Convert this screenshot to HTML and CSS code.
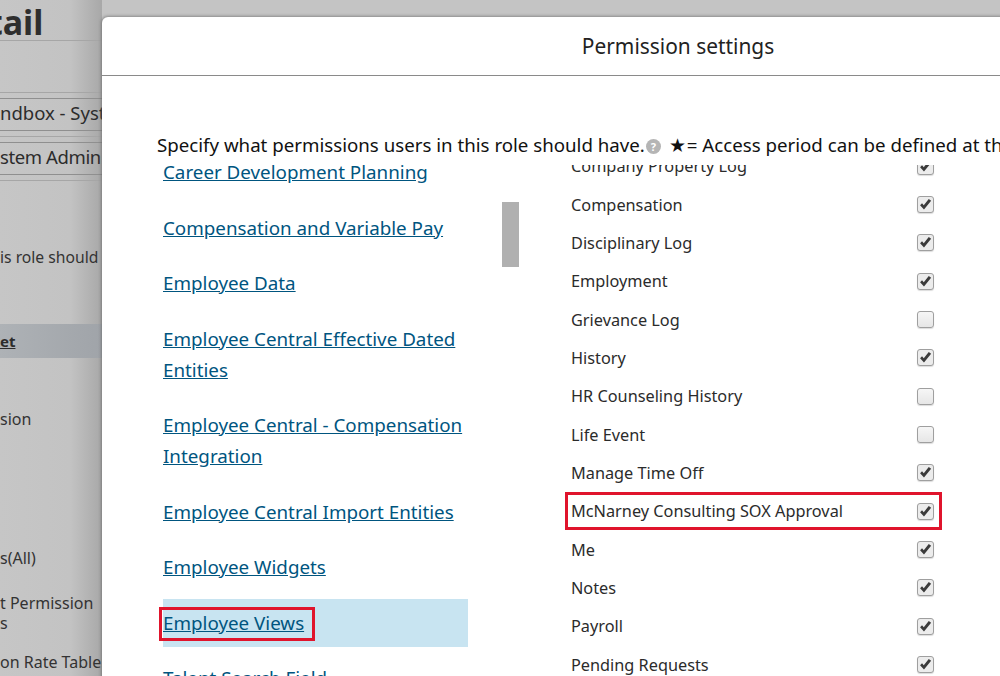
FILE: index.html
```html
<!DOCTYPE html>
<html lang="en">
<head>
<meta charset="utf-8">
<title>Permission settings</title>
<link rel="stylesheet" href="styles.css">
</head>
<body>
<div class="page">
  <aside class="backdrop">
    <h1 class="bg-title">tail</h1>
    <div class="bg-field"><span>ndbox - Syst</span></div>
    <div class="bg-field bg-field-next"><span>stem Admin</span></div>
    <p class="bg-note">is role should</p>
    <div class="bg-band"><span>et</span></div>
    <p class="bg-item bg-sion">sion</p>
    <p class="bg-item bg-all">s(All)</p>
    <p class="bg-item bg-perm">t Permission<br>s</p>
    <p class="bg-item bg-rate">on Rate Table:</p>
  </aside>

  <section class="dialog">
    <header class="dialog-head">Permission settings</header>
    <p class="intro">Specify what permissions users in this role should have.<span class="help">?</span> <span class="star">★</span>= Access period can be defined at the granting rule level.</p>
    <div class="panes">
      <nav class="cats">
        <ul class="cat-list">
          <li class="cat"><a href="#">Career Development Planning</a></li>
          <li class="cat"><a href="#">Compensation and Variable Pay</a></li>
          <li class="cat"><a href="#">Employee Data</a></li>
          <li class="cat"><a href="#">Employee Central Effective Dated Entities</a></li>
          <li class="cat"><a href="#">Employee Central - Compensation Integration</a></li>
          <li class="cat"><a href="#">Employee Central Import Entities</a></li>
          <li class="cat"><a href="#">Employee Widgets</a></li>
          <li class="cat cat-active"><a class="marked" href="#">Employee Views</a></li>
          <li class="cat"><a href="#">Talent Search Field</a></li>
        </ul>
      </nav>
      <div class="scroll-track"><div class="scroll-thumb"></div></div>
      <div class="perms">
        <ul class="perm-list">
          <li class="perm"><span>Company Property Log</span><i class="box on"><svg viewBox="0 0 12 12"><path d="M1 6.6 4.6 10.6 11.2 2.6 9 1 4.4 6.6 2.8 4.8Z"/></svg></i></li>
          <li class="perm"><span>Compensation</span><i class="box on"><svg viewBox="0 0 12 12"><path d="M1 6.6 4.6 10.6 11.2 2.6 9 1 4.4 6.6 2.8 4.8Z"/></svg></i></li>
          <li class="perm"><span>Disciplinary Log</span><i class="box on"><svg viewBox="0 0 12 12"><path d="M1 6.6 4.6 10.6 11.2 2.6 9 1 4.4 6.6 2.8 4.8Z"/></svg></i></li>
          <li class="perm"><span>Employment</span><i class="box on"><svg viewBox="0 0 12 12"><path d="M1 6.6 4.6 10.6 11.2 2.6 9 1 4.4 6.6 2.8 4.8Z"/></svg></i></li>
          <li class="perm"><span>Grievance Log</span><i class="box"></i></li>
          <li class="perm"><span>History</span><i class="box on"><svg viewBox="0 0 12 12"><path d="M1 6.6 4.6 10.6 11.2 2.6 9 1 4.4 6.6 2.8 4.8Z"/></svg></i></li>
          <li class="perm"><span>HR Counseling History</span><i class="box"></i></li>
          <li class="perm"><span>Life Event</span><i class="box"></i></li>
          <li class="perm"><span>Manage Time Off</span><i class="box on"><svg viewBox="0 0 12 12"><path d="M1 6.6 4.6 10.6 11.2 2.6 9 1 4.4 6.6 2.8 4.8Z"/></svg></i></li>
          <li class="perm perm-marked"><span>McNarney Consulting SOX Approval</span><i class="box on"><svg viewBox="0 0 12 12"><path d="M1 6.6 4.6 10.6 11.2 2.6 9 1 4.4 6.6 2.8 4.8Z"/></svg></i></li>
          <li class="perm"><span>Me</span><i class="box on"><svg viewBox="0 0 12 12"><path d="M1 6.6 4.6 10.6 11.2 2.6 9 1 4.4 6.6 2.8 4.8Z"/></svg></i></li>
          <li class="perm"><span>Notes</span><i class="box on"><svg viewBox="0 0 12 12"><path d="M1 6.6 4.6 10.6 11.2 2.6 9 1 4.4 6.6 2.8 4.8Z"/></svg></i></li>
          <li class="perm"><span>Payroll</span><i class="box on"><svg viewBox="0 0 12 12"><path d="M1 6.6 4.6 10.6 11.2 2.6 9 1 4.4 6.6 2.8 4.8Z"/></svg></i></li>
          <li class="perm"><span>Pending Requests</span><i class="box on"><svg viewBox="0 0 12 12"><path d="M1 6.6 4.6 10.6 11.2 2.6 9 1 4.4 6.6 2.8 4.8Z"/></svg></i></li>
        </ul>
      </div>
    </div>
  </section>
</div>
</body>
</html>
```
FILE: styles.css
```css
* { box-sizing: border-box; }
html, body { margin: 0; padding: 0; }
body { font-family: "Noto Sans", "Open Sans", sans-serif; background: #c4c4c4; overflow: hidden; }
ul { list-style: none; margin: 0; padding: 0; }
p, h1 { margin: 0; }

.page { position: relative; width: 1000px; height: 676px; overflow: hidden;
  background: linear-gradient(90deg, #c6c6c6 0, #c3c3c3 70px, #a8a8a8 102px, #c4c4c4 102px); }

/* dimmed page behind the dialog */
.backdrop { width: 102px; height: 676px; overflow: hidden; color: #2c2c2c; white-space: nowrap; }
.bg-title { height: 41px; margin: 0 0 51px -12px; border-bottom: 1px solid #a6a6a6; font-size: 34px; line-height: 44px; font-weight: 700; color: #2e2e2e; }
.bg-field { height: 45px; padding: 5px 0; border-top: 1px solid #a6a6a6; border-bottom: 1px solid #a6a6a6; font-size: 18.5px; }
.bg-field span { display: block; height: 33px; border-top: 1px solid #8f8f8f; border-bottom: 1px solid #8f8f8f; line-height: 28px; }
.bg-field-next { margin-top: -1px; }
.bg-field-next span { letter-spacing: -.4px; }
.bg-note { font-size: 15.7px; line-height: 22px; margin-top: 65px; color: #333; }
.bg-band { height: 34px; margin-top: 56px; background: linear-gradient(90deg, #aeb2b6, #a0a4a9); font-size: 15px; line-height: 34px; font-weight: 700; }
.bg-band span { text-decoration: underline; }
.bg-item { font-size: 16px; line-height: 20px; color: #333; }
.bg-sion { margin-top: 51px; }
.bg-all { margin-top: 119px; }
.bg-perm { margin-top: 25px; }
.bg-rate { margin-top: 19px; }

/* dialog */
.dialog { position: absolute; left: 102px; top: 17px; width: 1152px; height: 720px; background: #fff; border-radius: 6px 6px 0 0; box-shadow: 0 0 3px 1px rgba(90, 90, 90, .55); color: #000; }
.dialog-head { height: 59px; border-bottom: 1px solid #8a8a8a; text-align: center; font-size: 20.9px; line-height: 59px; color: #222; }
.intro { margin: 55px 0 0 55px; font-size: 18.7px; line-height: 28px; white-space: nowrap; color: #111; }
.help { display: inline-block; width: 15px; height: 15px; margin: 0 3px 0 1px; border-radius: 50%; background: #b5b5b5; color: #fff; font-size: 11px; line-height: 15px; font-weight: 700; text-align: center; vertical-align: 1px; }
.star { margin-right: 1px; }

.panes { display: flex; height: 511px; margin-top: 6px; overflow: hidden; }
.cats { width: 406px; margin-left: 55px; padding-left: 6px; overflow: hidden; flex: none; }
.cat-list { margin-top: -8px; }
.cat { width: 305px; font-size: 18.8px; line-height: 31px; margin-bottom: 24.5px; }
.cat a { color: #00557f; text-decoration: underline; }
.cat-active { margin: -8.5px 0 16px; padding: 8.5px 0; background: #c8e4f1; }
.cat .marked { display: inline-block; vertical-align: top; height: 34px; margin: -1px 0 -2px -4px; padding: 0 8px 0 1px; border: 3px solid #e0142c; line-height: 27px; }

.scroll-track { width: 17px; margin-left: -61px; padding-top: 37px; flex: none; }
.scroll-thumb { width: 17px; height: 65px; background: #b0b0b0; }

.perms { width: 380px; margin-left: 46px; overflow: hidden; flex: none; }
.perm-list { margin-top: -18px; }
.perm { display: flex; align-items: center; justify-content: space-between; height: 38.35px; padding: 0 8px 0 6px; width: 377px; font-size: 16.3px; color: #2b2b2b; }
.perm-marked { outline: 3px solid #e0142c; outline-offset: -3px; }
.box { display: block; width: 17px; height: 17px; padding: 1px; border: 1px solid #9f9f9f; border-radius: 3px; background: linear-gradient(#f6f6f6, #e6e6e6); box-shadow: 0 1px 1px rgba(0, 0, 0, .14); }
.box svg { display: block; width: 13px; height: 13px; fill: #3b3b3b; }
.box.on { background: #ececec; }
```
